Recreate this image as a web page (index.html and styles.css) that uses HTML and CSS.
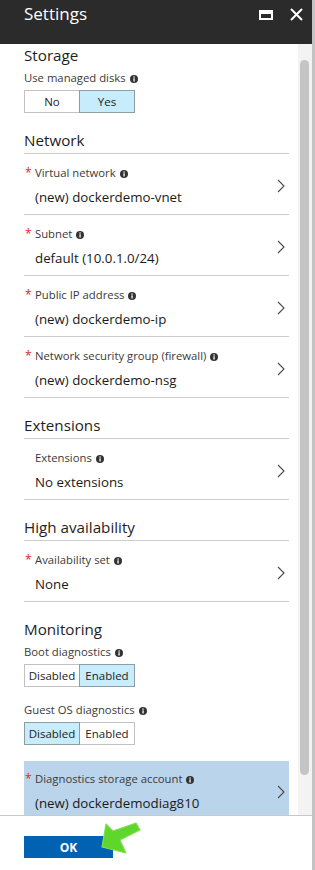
FILE: index.html
```html
<!DOCTYPE html>
<html>
<head>
<meta charset="utf-8">
<link rel="stylesheet" href="styles.css">
</head>
<body>
<div class="blade">
  <header class="bar">
    <h1 class="title">Settings</h1>
    <div class="bar-icons">
      <svg class="icon-max" width="14" height="10" viewBox="0 0 14 10"><rect x="1" y="1" width="12" height="8" fill="none" stroke="#fff" stroke-width="2"/><rect x="1" y="1" width="12" height="3" fill="#fff"/></svg>
      <svg class="icon-close" width="13" height="13" viewBox="0 0 13 13"><path d="M1 1L12 12M12 1L1 12" stroke="#fff" stroke-width="2" fill="none"/></svg>
    </div>
  </header>
  <div class="body">
    <main class="content">
      <section class="group first">
        <h2 class="group-title">Storage</h2>
        <div class="field-label">Use managed disks <svg class="info" width="8" height="8" viewBox="0 0 8 8"><circle cx="4" cy="4" r="4" fill="#333"/><rect x="3.4" y="3.3" width="1.3" height="3.2" fill="#fff"/><rect x="3.4" y="1.4" width="1.3" height="1.3" fill="#fff"/></svg></div>
        <div class="toggle"><span class="opt">No</span><span class="opt on">Yes</span></div>
      </section>

      <section class="group">
        <h2 class="group-title ruled">Network</h2>
        <div class="row">
          <div class="row-text">
            <div class="row-label"><span class="req">*</span>Virtual network <svg class="info" width="8" height="8" viewBox="0 0 8 8"><circle cx="4" cy="4" r="4" fill="#333"/><rect x="3.4" y="3.3" width="1.3" height="3.2" fill="#fff"/><rect x="3.4" y="1.4" width="1.3" height="1.3" fill="#fff"/></svg></div>
            <div class="row-value">(new) dockerdemo-vnet</div>
          </div>
          <svg class="chev" width="8" height="14" viewBox="0 0 8 14"><polyline points="1,1 7,7 1,13" fill="none" stroke="#4a4a4a" stroke-width="1.1"/></svg>
        </div>
        <div class="row">
          <div class="row-text">
            <div class="row-label"><span class="req">*</span>Subnet <svg class="info" width="8" height="8" viewBox="0 0 8 8"><circle cx="4" cy="4" r="4" fill="#333"/><rect x="3.4" y="3.3" width="1.3" height="3.2" fill="#fff"/><rect x="3.4" y="1.4" width="1.3" height="1.3" fill="#fff"/></svg></div>
            <div class="row-value">default (10.0.1.0/24)</div>
          </div>
          <svg class="chev" width="8" height="14" viewBox="0 0 8 14"><polyline points="1,1 7,7 1,13" fill="none" stroke="#4a4a4a" stroke-width="1.1"/></svg>
        </div>
        <div class="row">
          <div class="row-text">
            <div class="row-label"><span class="req">*</span>Public IP address <svg class="info" width="8" height="8" viewBox="0 0 8 8"><circle cx="4" cy="4" r="4" fill="#333"/><rect x="3.4" y="3.3" width="1.3" height="3.2" fill="#fff"/><rect x="3.4" y="1.4" width="1.3" height="1.3" fill="#fff"/></svg></div>
            <div class="row-value">(new) dockerdemo-ip</div>
          </div>
          <svg class="chev" width="8" height="14" viewBox="0 0 8 14"><polyline points="1,1 7,7 1,13" fill="none" stroke="#4a4a4a" stroke-width="1.1"/></svg>
        </div>
        <div class="row">
          <div class="row-text">
            <div class="row-label"><span class="req">*</span>Network security group (firewall) <svg class="info" width="8" height="8" viewBox="0 0 8 8"><circle cx="4" cy="4" r="4" fill="#333"/><rect x="3.4" y="3.3" width="1.3" height="3.2" fill="#fff"/><rect x="3.4" y="1.4" width="1.3" height="1.3" fill="#fff"/></svg></div>
            <div class="row-value">(new) dockerdemo-nsg</div>
          </div>
          <svg class="chev" width="8" height="14" viewBox="0 0 8 14"><polyline points="1,1 7,7 1,13" fill="none" stroke="#4a4a4a" stroke-width="1.1"/></svg>
        </div>
      </section>

      <section class="group after-rows">
        <h2 class="group-title ruled">Extensions</h2>
        <div class="row">
          <div class="row-text">
            <div class="row-label">Extensions <svg class="info" width="8" height="8" viewBox="0 0 8 8"><circle cx="4" cy="4" r="4" fill="#333"/><rect x="3.4" y="3.3" width="1.3" height="3.2" fill="#fff"/><rect x="3.4" y="1.4" width="1.3" height="1.3" fill="#fff"/></svg></div>
            <div class="row-value">No extensions</div>
          </div>
          <svg class="chev" width="8" height="14" viewBox="0 0 8 14"><polyline points="1,1 7,7 1,13" fill="none" stroke="#4a4a4a" stroke-width="1.1"/></svg>
        </div>
      </section>

      <section class="group after-rows">
        <h2 class="group-title ruled">High availability</h2>
        <div class="row">
          <div class="row-text">
            <div class="row-label"><span class="req">*</span>Availability set <svg class="info" width="8" height="8" viewBox="0 0 8 8"><circle cx="4" cy="4" r="4" fill="#333"/><rect x="3.4" y="3.3" width="1.3" height="3.2" fill="#fff"/><rect x="3.4" y="1.4" width="1.3" height="1.3" fill="#fff"/></svg></div>
            <div class="row-value">None</div>
          </div>
          <svg class="chev" width="8" height="14" viewBox="0 0 8 14"><polyline points="1,1 7,7 1,13" fill="none" stroke="#4a4a4a" stroke-width="1.1"/></svg>
        </div>
      </section>

      <section class="group after-rows">
        <h2 class="group-title">Monitoring</h2>
        <div class="field-label">Boot diagnostics <svg class="info" width="8" height="8" viewBox="0 0 8 8"><circle cx="4" cy="4" r="4" fill="#333"/><rect x="3.4" y="3.3" width="1.3" height="3.2" fill="#fff"/><rect x="3.4" y="1.4" width="1.3" height="1.3" fill="#fff"/></svg></div>
        <div class="toggle"><span class="opt">Disabled</span><span class="opt on">Enabled</span></div>
        <div class="field-label spaced">Guest OS diagnostics <svg class="info" width="8" height="8" viewBox="0 0 8 8"><circle cx="4" cy="4" r="4" fill="#333"/><rect x="3.4" y="3.3" width="1.3" height="3.2" fill="#fff"/><rect x="3.4" y="1.4" width="1.3" height="1.3" fill="#fff"/></svg></div>
        <div class="toggle"><span class="opt on">Disabled</span><span class="opt">Enabled</span></div>
        <div class="row selected">
          <div class="row-text">
            <div class="row-label"><span class="req">*</span>Diagnostics storage account <svg class="info" width="8" height="8" viewBox="0 0 8 8"><circle cx="4" cy="4" r="4" fill="#333"/><rect x="3.4" y="3.3" width="1.3" height="3.2" fill="#fff"/><rect x="3.4" y="1.4" width="1.3" height="1.3" fill="#fff"/></svg></div>
            <div class="row-value">(new) dockerdemodiag810</div>
          </div>
          <svg class="chev" width="8" height="14" viewBox="0 0 8 14"><polyline points="1,1 7,7 1,13" fill="none" stroke="#4a4a4a" stroke-width="1.1"/></svg>
        </div>
      </section>
    </main>
    <div class="scrollbar"><div class="thumb"></div></div>
  </div>
  <footer class="foot">
    <button class="ok">OK</button>
    <svg class="arrow" width="46" height="38" viewBox="0 0 46 38"><polygon points="4,28 8,5 15,12 38,4 42,11 22,21 28,34" fill="#5fd62b" stroke="#7fe04f" stroke-width="1.2" stroke-linejoin="round"/></svg>
  </footer>
</div>
</body>
</html>
```

FILE: styles.css
```css
html, body {
  margin: 0;
  padding: 0;
}
body {
  background: #c3c3c3;
  font-family: "Open Sans", "Noto Sans", sans-serif;
  color: #1e1e1e;
}
.blade {
  width: 312px;
  height: 870px;
  background: #fff;
  display: flex;
  flex-direction: column;
}
.bar {
  flex: none;
  height: 44px;
  background: #2b2b2b;
  display: flex;
  align-items: center;
  justify-content: space-between;
  padding: 0 9px 16px 24px;
  box-sizing: border-box;
}
.title {
  margin: 0;
  font-size: 17px;
  font-weight: 400;
  color: #fff;
  line-height: 22px;
}
.bar-icons {
  display: flex;
  align-items: center;
  gap: 17px;
  margin-top: 1px;
}
.body {
  flex: 1;
  display: flex;
  min-height: 0;
}
.content {
  width: 298px;
  box-sizing: border-box;
  padding: 1px 9px 0 24px;
  overflow: hidden;
}
.scrollbar {
  width: 14px;
  background: #f3f3f3;
  padding-top: 16px;
  box-sizing: border-box;
}
.thumb {
  width: 9px;
  margin-left: 2px;
  height: 715px;
  background: #c4c4c4;
  border-radius: 5px;
}
.group {
  margin-top: 17px;
}
.group.first {
  margin-top: 0;
}
.group-title {
  margin: 0;
  font-size: 15.2px;
  font-weight: 400;
  line-height: 20px;
  color: #1e1e1e;
}
.group-title.ruled {
  padding-bottom: 3px;
  border-bottom: 1px solid #cdcdcd;
}
.field-label {
  margin-top: 6px;
  font-size: 11.3px;
  line-height: 14px;
  color: #3a3a3a;
}
.field-label.spaced {
  margin-top: 16px;
}
.info {
  vertical-align: -0.5px;
  margin-left: 1px;
}
.toggle {
  margin-top: 5px;
  display: flex;
  width: max-content;
}
.opt {
  width: 54px;
  height: 21px;
  line-height: 21px;
  text-align: center;
  font-size: 11.5px;
  color: #222;
  border: 1px solid #c2c2c2;
  background: #fff;
}
.opt + .opt {
  margin-left: -1px;
}
.opt.on {
  background: #c7ecfb;
  border-color: #8f9ca3;
  position: relative;
  z-index: 1;
}
.row {
  display: flex;
  align-items: center;
  border-bottom: 1px solid #cdcdcd;
  padding: 11px 4px 7px 11px;
}
.row-text {
  flex: 1;
  min-width: 0;
}
.row-label {
  font-size: 11.3px;
  line-height: 16px;
  color: #3a3a3a;
  white-space: nowrap;
}
.req {
  display: inline-block;
  width: 10px;
  margin-left: -10px;
  color: #e0242a;
  font-size: 12px;
}
.row-value {
  margin-top: 6px;
  font-size: 13.3px;
  line-height: 20px;
  color: #1a1a1a;
  white-space: nowrap;
}
.chev {
  flex: none;
}
.row.selected {
  margin-top: 16px;
  background: #bad4ec;
  border-bottom: none;
  padding-top: 10px;
}
.foot {
  flex: none;
  height: 55px;
  border-top: 1px solid #c8c8c8;
  box-sizing: border-box;
  padding: 20px 0 0 24px;
  position: relative;
}
.ok {
  display: block;
  width: 89px;
  height: 22px;
  padding: 0;
  background: #0062b0;
  border: 0;
  color: #fff;
  font-family: "Open Sans", sans-serif;
  font-weight: 700;
  font-size: 12px;
}
.arrow {
  position: absolute;
  left: 98px;
  top: 3px;
}
```
